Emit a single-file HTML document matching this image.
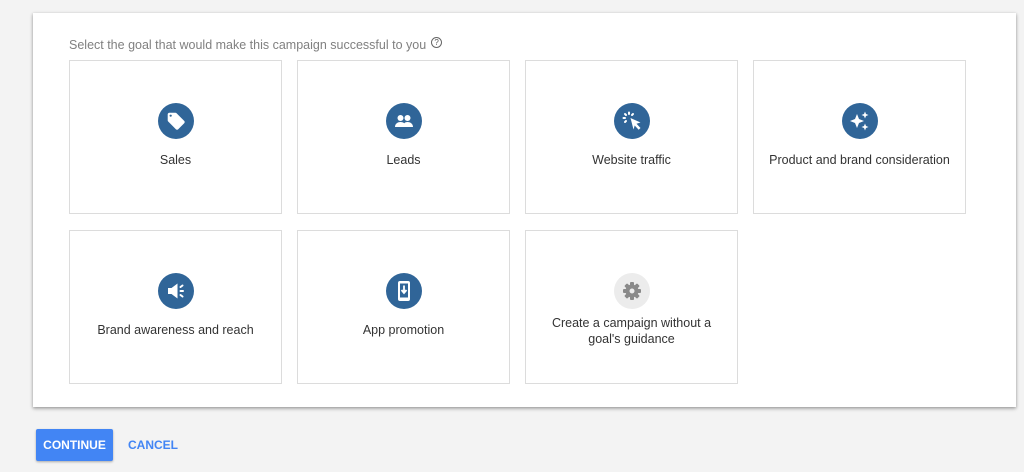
<!DOCTYPE html>
<html><head><style>
body{margin:0;width:1024px;height:472px;background:#f3f3f3;font-family:"Liberation Sans",Arial,sans-serif;position:relative;overflow:hidden}
.card{position:absolute;left:33px;top:13px;width:983px;height:394px;background:#fff;box-shadow:0 1px 3px rgba(0,0,0,.3),0 2px 4px rgba(0,0,0,.15)}
.hdr{position:absolute;left:69px;top:37px;font-size:12.5px;color:#808080}
.hdr span{display:inline-block;width:9px;height:9px;border:1px solid #666;border-radius:50%;font-size:8px;text-align:center;line-height:9px;color:#555;vertical-align:4px;margin-left:5px}
.t{position:absolute;width:211px;height:152px;border:1px solid #dcdcdc;background:#fff;text-align:center}
.t .ic{position:absolute;left:88px;top:42px;width:36px;height:36px;border-radius:50%;background:#306598}
.t .ic svg{width:36px;height:36px;display:block}
.t .lb{position:absolute;left:0;right:0;top:91px;font-size:12.5px;color:#333;line-height:16px}
.btn{position:absolute;left:36px;top:429px;width:77px;height:32px;background:#4285f4;border-radius:2px;color:#fff;font-weight:bold;font-size:12px;line-height:32px;text-align:center;box-shadow:0 1px 2px rgba(0,0,0,.3)}
.cn{position:absolute;left:128px;top:429px;line-height:32px;font-size:12px;font-weight:bold;color:#4285f4}
</style></head><body>
<div class="card"></div>
<div class="hdr">Select the goal that would make this campaign successful to you<span>?</span></div>

<div class="t" style="left:69px;top:60px"><div class="ic"><svg viewBox="0 0 36 36"><g transform="translate(8,8) scale(.85)"><path d="M21.41 11.58l-9-9C12.05 2.22 11.55 2 11 2H4c-1.1 0-2 .9-2 2v7c0 .55.22 1.05.59 1.42l9 9c.36.36.86.58 1.41.58.55 0 1.05-.22 1.41-.59l7-7c.37-.36.59-.86.59-1.41 0-.55-.23-1.06-.59-1.42z" fill="#fff"/><circle cx="5.5" cy="5.5" r="1.3" fill="#306598"/></g></svg></div><div class="lb">Sales</div></div>
<div class="t" style="left:297px;top:60px"><div class="ic"><svg viewBox="0 0 36 36"><circle cx="14.5" cy="15" r="3" fill="#fff"/><circle cx="21.5" cy="15" r="3" fill="#fff"/><path d="M9 24c0-3.5 3-5 5.5-5s5.5 1.5 5.5 5zM17 24c0-3.5 2-5 4.5-5s5.5 1.5 5.5 5z" fill="#fff"/></svg></div><div class="lb">Leads</div></div>
<div class="t" style="left:525px;top:60px"><div class="ic"><svg viewBox="0 0 36 36"><path d="M16.5 15l10 4.5-4 1.2 4 4.3-1.8 1.8-4-4.3-1.2 4z" fill="#fff"/><g stroke="#fff" stroke-width="2" stroke-linecap="round"><path d="M15 9.5v1.5M9.5 15h1.5M11 11l1 1M19 11l-1 1M11 19l1-1"/></g></svg></div><div class="lb">Website traffic</div></div>
<div class="t" style="left:753px;top:60px"><div class="ic"><svg viewBox="0 0 36 36"><path d="M15 11l2 5 5 2-5 2-2 5-2-5-5-2 5-2z" fill="#fff"/><path d="M23 8.5l1 2.5 2.5 1-2.5 1-1 2.5-1-2.5-2.5-1 2.5-1zM23 20.5l1 2.5 2.5 1-2.5 1-1 2.5-1-2.5-2.5-1 2.5-1z" fill="#fff"/></svg></div><div class="lb">Product and brand consideration</div></div>

<div class="t" style="left:69px;top:230px"><div class="ic"><svg viewBox="0 0 36 36"><path d="M10 15h3.5l6-4.5v15l-6-4.5H10z" fill="#fff"/><g stroke="#fff" stroke-width="2" stroke-linecap="round"><path d="M22.5 18h2.5M22.5 14l2-1.5M22.5 22l2 1.5"/></g></svg></div><div class="lb">Brand awareness and reach</div></div>
<div class="t" style="left:297px;top:230px"><div class="ic"><svg viewBox="0 0 36 36"><rect x="12" y="8" width="12" height="20" rx="2" fill="#fff"/><rect x="14" y="10.5" width="8" height="14" fill="#306598"/><path d="M18 12.5v7M15.5 17l2.5 3 2.5-3" stroke="#fff" stroke-width="1.8" fill="none"/></svg></div><div class="lb">App promotion</div></div>
<div class="t" style="left:525px;top:230px"><div class="ic" style="background:#ececec"><svg viewBox="0 0 36 36"><g fill="#8a8a8a"><g transform="translate(18 18)"><rect x="-2" y="-9" width="4" height="18" rx="1"/><rect x="-2" y="-9" width="4" height="18" rx="1" transform="rotate(45)"/><rect x="-2" y="-9" width="4" height="18" rx="1" transform="rotate(90)"/><rect x="-2" y="-9" width="4" height="18" rx="1" transform="rotate(135)"/><circle r="6.5"/><circle r="2.5" fill="#ececec"/></g></g></svg></div><div class="lb" style="top:84px">Create a campaign without a<br>goal's guidance</div></div>

<div class="btn">CONTINUE</div>
<div class="cn">CANCEL</div>
</body></html>
